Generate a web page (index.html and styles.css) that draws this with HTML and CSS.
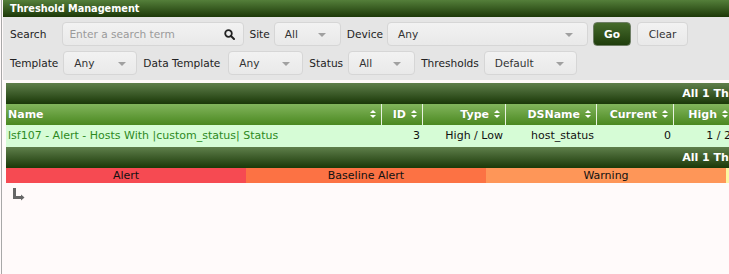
FILE: index.html
```html
<!DOCTYPE html>
<html>
<head>
<meta charset="utf-8">
<link rel="stylesheet" href="styles.css">
</head>
<body>
<div class="page">
  <div class="panel">
    <div class="panel-title">Threshold Management</div>
    <div class="filters">
      <div class="frow">
        <span class="lbl">Search</span>
        <div class="search"><span class="ph">Enter a search term</span>
          <svg class="mag" width="11" height="11" viewBox="0 0 11 11"><circle cx="4.5" cy="4.5" r="3.3" fill="none" stroke="#222" stroke-width="1.8"/><line x1="7" y1="7" x2="10" y2="10" stroke="#222" stroke-width="2" stroke-linecap="round"/></svg>
        </div>
        <span class="lbl">Site</span>
        <div class="sel w-site"><span>All</span><i class="tri"></i></div>
        <span class="lbl">Device</span>
        <div class="sel w-device"><span>Any</span><i class="tri"></i></div>
        <div class="btn go">Go</div>
        <div class="btn clear">Clear</div>
      </div>
      <div class="frow row2">
        <span class="lbl">Template</span>
        <div class="sel w-tpl"><span>Any</span><i class="tri"></i></div>
        <span class="lbl lbl-dt">Data Template</span>
        <div class="sel w-dtpl"><span>Any</span><i class="tri"></i></div>
        <span class="lbl">Status</span>
        <div class="sel w-status"><span>All</span><i class="tri"></i></div>
        <span class="lbl">Thresholds</span>
        <div class="sel w-thold"><span>Default</span><i class="tri"></i></div>
      </div>
    </div>
  </div>

  <div class="content">
    <div class="nav"><span>All 1 Thresholds</span></div>
    <div class="thead">
      <div class="th c-name left">Name<i class="sort"></i></div>
      <div class="th c-id">ID<i class="sort"></i></div>
      <div class="th c-type">Type<i class="sort"></i></div>
      <div class="th c-ds">DSName<i class="sort"></i></div>
      <div class="th c-cur">Current<i class="sort"></i></div>
      <div class="th c-high">High<i class="sort"></i></div>
      <div class="th c-low">Low<i class="sort"></i></div>
      <div class="th c-rest">Trigger<i class="sort"></i></div>
    </div>
    <div class="trow">
      <div class="td c-name left name">lsf107 - Alert - Hosts With |custom_status| Status</div>
      <div class="td c-id">3</div>
      <div class="td c-type">High / Low</div>
      <div class="td c-ds">host_status</div>
      <div class="td c-cur">0</div>
      <div class="td c-high">1 / 2</div>
      <div class="td c-low">0 / 0</div>
      <div class="td c-rest">1</div>
    </div>
    <div class="nav"><span>All 1 Thresholds</span></div>
    <div class="legend">
      <div class="lg alert">Alert</div>
      <div class="lg baseline">Baseline Alert</div>
      <div class="lg warning">Warning</div>
      <div class="lg notice">Notice</div>
      <div class="lg ok">Ok</div>
      <div class="lg disabled">Disabled</div>
    </div>
    <div class="actions">
      <svg width="13" height="13" viewBox="0 0 13 13"><path d="M2.5 0 V9.5 H9.5" fill="none" stroke="#666" stroke-width="3"/><path d="M9 6.5 L12.5 9.5 L9 12.5 Z" fill="#666"/></svg>
    </div>
  </div>
</div>
</body>
</html>
```

FILE: styles.css
```css
html, body {
  margin: 0;
  padding: 0;
  overflow: hidden;
  background: #fffafa;
}
body {
  font-family: "DejaVu Sans", Verdana, sans-serif;
  font-size: 10.6px;
  color: #222;
}
.page {
  margin-left: 1px;
  border-left: 1px solid #a8a8a8;
  padding-left: 1px;
  min-height: 274px;
  width: 1500px;
}
.panel-title {
  height: 17px;
  line-height: 17px;
  padding-left: 7px;
  color: #fff;
  font-weight: bold;
  font-family: "DejaVu Sans Condensed", "DejaVu Sans", sans-serif;
  font-size: 10.8px;
  background: linear-gradient(#547f3a, #1c3808);
}
.filters {
  background: #e5e5e5;
  padding: 5px 0 5px 7px;
  height: 53px;
}
.frow {
  display: flex;
  align-items: center;
  height: 24px;
  margin-bottom: 5px;
}
.lbl {
  margin-right: 4px;
  color: #222;
  white-space: nowrap;
}
.row2 .lbl { margin-right: 5px; }
.row2 .lbl-dt { margin-right: 8px; }
.search, .sel, .btn {
  box-sizing: border-box;
  height: 24px;
  border: 1px solid #d6d6d6;
  border-radius: 4px;
  background: linear-gradient(#f2f2f2, #e9e9e9);
  display: flex;
  align-items: center;
  margin-right: 5px;
}
.search {
  width: 182px;
  padding: 0 8px 0 0;
  margin-left: 12px;
  justify-content: space-between;
}
.ph {
  color: #9a9a9a;
  padding-left: 6px;
}
.sel {
  padding: 0 0 0 10px;
  position: relative;
  color: #333;
  margin-right: 6px;
}
.tri {
  position: absolute;
  top: 10px;
  width: 0;
  height: 0;
  border-left: 4px solid transparent;
  border-right: 4px solid transparent;
  border-top: 4px solid #a0a0a0;
}
.w-site { width: 67px; }
.w-site .tri { left: 43px; }
.w-device { width: 201px; margin-right: 5px; }
.w-device .tri { left: 177px; }
.w-tpl { width: 74px; }
.w-tpl .tri { left: 54px; }
.w-dtpl { width: 75px; }
.w-dtpl .tri { left: 53px; }
.w-status { width: 67px; }
.w-status .tri { left: 44px; }
.w-thold { width: 93px; }
.w-thold .tri { left: 71px; }
.btn {
  justify-content: center;
}
.go {
  width: 38px;
  background: linear-gradient(#466b2c, #1f3d0c);
  border-color: #6d7d64;
  color: #fff;
  font-weight: bold;
  margin-right: 6px;
}
.clear {
  width: 51px;
  color: #333;
}

.content {
  padding: 3px 0 0 3px;
}
.nav {
  height: 21px;
  line-height: 21px;
  background: linear-gradient(#5f7f4b, #1a3808);
  color: #fff;
  font-weight: bold;
  font-size: 11px;
  text-align: center;
  width: 1452px;
}
.thead, .trow {
  display: flex;
  width: 1452px;
}
.thead {
  height: 21px;
  background: linear-gradient(#82b55c, #4a8820);
}
.th {
  box-sizing: border-box;
  height: 21px;
  line-height: 21px;
  color: #fff;
  font-weight: bold;
  font-size: 11px;
  text-align: right;
  padding-right: 16px;
  position: relative;
  border-right: 1px solid #e8f2e0;
  text-shadow: 0 0 1px rgba(0,0,0,0.25);
}
.th.left { text-align: left; padding-left: 2px; }
.sort {
  position: absolute;
  right: 5px;
  top: 6px;
  width: 0;
  height: 0;
  border-left: 3px solid transparent;
  border-right: 3px solid transparent;
  border-bottom: 3px solid #fff;
}
.sort::after {
  content: "";
  position: absolute;
  left: -3px;
  top: 5px;
  border-left: 3px solid transparent;
  border-right: 3px solid transparent;
  border-top: 3px solid #fff;
}
.trow {
  height: 22px;
  background: #d6fcd6;
}
.td {
  box-sizing: border-box;
  line-height: 22px;
  font-size: 11px;
  text-align: right;
  padding-right: 3px;
  color: #111;
  white-space: nowrap;
}
.td.left { text-align: left; padding-left: 2px; }
.td.name { color: #2d8a1e; }
.c-name { width: 376px; }
.c-id { width: 41px; }
.c-type { width: 83px; }
.c-ds { width: 91px; }
.c-cur { width: 77px; }
.c-high { width: 60px; }
.c-low { width: 70px; }
.c-rest { flex: 1; text-align: left; }

.legend {
  display: flex;
  width: 1452px;
  height: 15px;
}
.lg {
  width: 240px;
  line-height: 15px;
  text-align: center;
  font-size: 11px;
  color: #111;
}
.alert { background: #f64a52; }
.baseline { background: #fc7244; }
.warning { background: #fe9658; }
.notice { background: #fbf7a2; }
.ok { background: #d6fcd6; }
.disabled { background: #e0e0e0; }
.actions {
  padding: 5px 0 0 6px;
  line-height: 0;
}
```
